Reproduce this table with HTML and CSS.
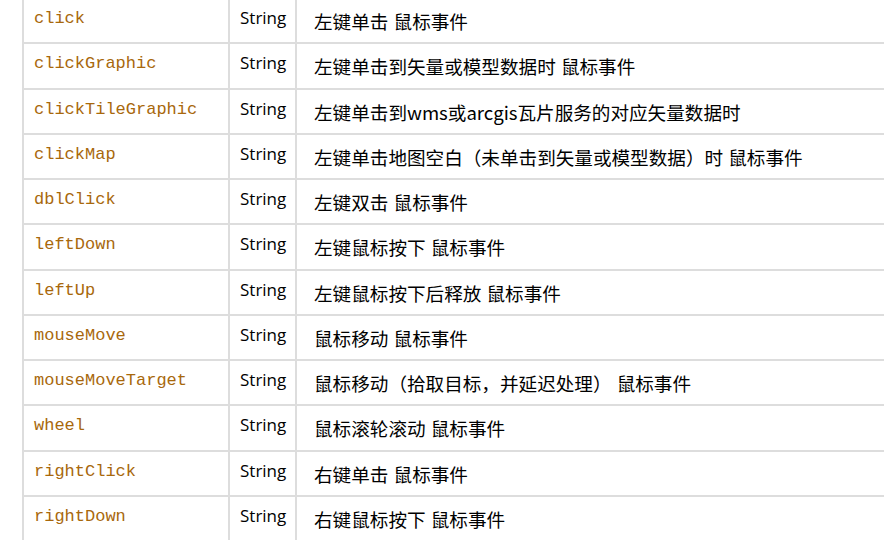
FILE: index.html
```html
<!DOCTYPE html>
<html lang="zh-CN">
<head>
<meta charset="utf-8">
<title>事件类型</title>
<link rel="stylesheet" href="styles.css">
</head>
<body>
<div class="page">
<table class="events">
<tbody>
<tr><td class="name"><code>click</code></td><td class="type">String</td><td class="desc">左键单击 鼠标事件</td></tr>
<tr><td class="name"><code>clickGraphic</code></td><td class="type">String</td><td class="desc">左键单击到矢量或模型数据时 鼠标事件</td></tr>
<tr><td class="name"><code>clickTileGraphic</code></td><td class="type">String</td><td class="desc">左键单击到wms或arcgis瓦片服务的对应矢量数据时</td></tr>
<tr><td class="name"><code>clickMap</code></td><td class="type">String</td><td class="desc">左键单击地图空白（未单击到矢量或模型数据）时 鼠标事件</td></tr>
<tr><td class="name"><code>dblClick</code></td><td class="type">String</td><td class="desc">左键双击 鼠标事件</td></tr>
<tr><td class="name"><code>leftDown</code></td><td class="type">String</td><td class="desc">左键鼠标按下 鼠标事件</td></tr>
<tr><td class="name"><code>leftUp</code></td><td class="type">String</td><td class="desc">左键鼠标按下后释放 鼠标事件</td></tr>
<tr><td class="name"><code>mouseMove</code></td><td class="type">String</td><td class="desc">鼠标移动 鼠标事件</td></tr>
<tr><td class="name"><code>mouseMoveTarget</code></td><td class="type">String</td><td class="desc">鼠标移动（拾取目标，并延迟处理） 鼠标事件</td></tr>
<tr><td class="name"><code>wheel</code></td><td class="type">String</td><td class="desc">鼠标滚轮滚动 鼠标事件</td></tr>
<tr><td class="name"><code>rightClick</code></td><td class="type">String</td><td class="desc">右键单击 鼠标事件</td></tr>
<tr><td class="name"><code>rightDown</code></td><td class="type">String</td><td class="desc">右键鼠标按下 鼠标事件</td></tr>
</tbody>
</table>
</div>
</body>
</html>
```
FILE: styles.css
```css
html, body {
  margin: 0;
  padding: 0;
  background: #ffffff;
  overflow: hidden;
}

.page {
  padding-left: 22px;
  margin-top: -3px;
}

.events {
  border-collapse: collapse;
  width: 1100px;
  table-layout: fixed;
  color: #000000;
}

.events tr {
  height: 45.27px;
}

.events td {
  border: 2px solid #dddddd;
  vertical-align: top;
  padding: 0;
  white-space: nowrap;
}

.events td.name {
  width: 206px;
  padding: 8px 0 0 10px;
  box-sizing: border-box;
}

.events td.type {
  width: 67px;
  padding: 7px 0 0 10px;
  box-sizing: border-box;
  font-family: "Open Sans", "Noto Sans", sans-serif;
  font-size: 17px;
  line-height: 24px;
}

.events td.desc {
  padding: 10px 0 0 17px;
  font-family: "Noto Sans CJK SC", "Open Sans", sans-serif;
  font-size: 18.6px;
  line-height: 24px;
  word-spacing: 1px;
}

.events code {
  font-family: "Liberation Mono", "DejaVu Sans Mono", monospace;
  font-size: 17px;
  line-height: 24px;
  color: #a8680c;
}
```
